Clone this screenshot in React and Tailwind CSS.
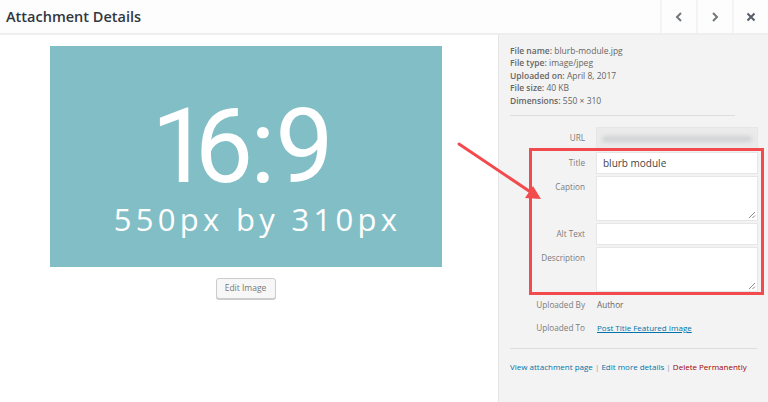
const openSans = "font-['Open_Sans','Noto_Sans',sans-serif]";

const Resize = () => (
  <svg viewBox="0 0 8 8" className="absolute right-[1px] bottom-[1px] w-2 h-2" stroke="#8a8a8a" strokeWidth="1">
    <path d="M1 7 7 1M4.5 7 7 4.5" />
  </svg>
);

const Field = ({ label, className, children }) => (
  <div className="flex">
    <div className="w-[75px] mr-3 pt-[3px] text-right text-[8.2px] leading-[14px] text-[#7c7c7c]">{label}</div>
    <div className={`relative w-[160px] bg-white shadow-[0_0_0_1px_#e6e6e6] ${className}`}>{children}</div>
  </div>
);

const NavButton = ({ children }) => (
  <div className="w-[36px] h-full flex items-center justify-center border-l-2 border-[#f4f4f4]">{children}</div>
);

export default function App() {
  return (
    <div className={`relative w-[768px] h-[402px] overflow-hidden bg-white flex flex-col ${openSans}`}>
      <header className="h-[35px] shrink-0 flex items-center justify-between pl-[6px] bg-[#fdfdfd] border-b-2 border-[#eeeef1]">
        <h1 className="text-[14.5px] font-semibold text-[#32373c]">Attachment Details</h1>
        <div className="h-full flex">
          <NavButton>
            <svg viewBox="0 0 12 12" className="w-3 h-3" fill="none" stroke="#72777c" strokeWidth="2"><path d="M8 2 4 6l4 4" /></svg>
          </NavButton>
          <NavButton>
            <svg viewBox="0 0 12 12" className="w-3 h-3" fill="none" stroke="#72777c" strokeWidth="2"><path d="M4 2l4 4-4 4" /></svg>
          </NavButton>
          <NavButton>
            <svg viewBox="0 0 12 12" className="w-3 h-3" fill="none" stroke="#555d66" strokeWidth="2"><path d="M2.5 2.5l7 7M9.5 2.5l-7 7" /></svg>
          </NavButton>
        </div>
      </header>

      <div className="flex flex-1 min-h-0">
        <main className="w-[498px] shrink-0 flex flex-col items-center pt-[11px] pr-[7px]">
          <div className="w-[392px] h-[221px] bg-[#82bec6] flex flex-col items-center text-white">
            <div className="mt-[51px] pr-[6px] font-['Roboto',sans-serif] text-[104px] leading-[100px]">
              <span className="tracking-[-15px]">1</span>
              <span className="tracking-[-3px]">6</span>:9
            </div>
            <div className="mt-[4px] pl-[24px] text-[31px] leading-[36px] tracking-[4.3px]">550px by 310px</div>
          </div>
          <button className="mt-[11px] h-[21px] w-[60px] rounded-[3px] bg-[#f7f7f7] border border-[#cccccc] shadow-[0_1px_0_#ccc] text-[8.5px] text-[#777777]">
            Edit Image
          </button>
        </main>

        <aside className="flex-1 bg-[#f3f3f3] border-l border-[#e6e6e6] pl-[11px] pt-[10px] text-[8.2px]">
          <div className="text-[8.5px] leading-[12.4px] text-[#666666]">
            <p><b className="font-semibold">File name:</b> blurb-module.jpg</p>
            <p><b className="font-semibold">File type:</b> image/jpeg</p>
            <p><b className="font-semibold">Uploaded on:</b> April 8, 2017</p>
            <p><b className="font-semibold">File size:</b> 40 KB</p>
            <p><b className="font-semibold">Dimensions:</b> 550 × 310</p>
          </div>
          <div className="mt-[8px] w-[225px] border-t border-[#dddddd]" />

          <div className="mt-[12px] flex flex-col gap-[4px]">
            <Field label="URL" className="h-[21px] !bg-[#ebebeb] overflow-hidden">
              <div className="mt-[8px] ml-[5px] h-[6px] w-[150px] rounded-full bg-[#cfd2d4] blur-[2px]" />
            </Field>
            <Field label="Title" className="h-[20px] px-[6px] text-[10px] leading-[20px] text-[#444444]">blurb module</Field>
            <Field label="Caption" className="h-[43px]"><Resize /></Field>
            <Field label="Alt Text" className="h-[20px]" />
            <Field label="Description" className="h-[43px]"><Resize /></Field>
          </div>

          <div className="mt-[7px] flex text-[#7c7c7c] leading-[14px]">
            <div className="w-[75px] mr-3 text-right">Uploaded By</div>
            <div className="text-[#666666]">Author</div>
          </div>
          <div className="mt-[9px] flex text-[#7c7c7c] leading-[14px]">
            <div className="w-[75px] mr-3 text-right">Uploaded To</div>
            <a className="text-[8px] text-[#0073aa] underline">Post Title Featured Image</a>
          </div>

          <div className="mt-[13px] w-[247px] border-t border-[#dddddd]" />
          <div className="mt-[11px] text-[8px] leading-[14px] text-[#999999] whitespace-nowrap">
            <a className="text-[#0073aa]">View attachment page</a> | <a className="text-[#0073aa]">Edit more details</a> | <a className="text-[#a00000]">Delete Permanently</a>
          </div>
        </aside>
      </div>

      {/* red annotation over the form */}
      <div className="absolute left-[529px] top-[148px] w-[235px] h-[147px] border-[3px] border-[#f24b4e]" />
      <svg className="absolute left-[450px] top-[135px] w-[100px] h-[80px]" viewBox="0 0 100 80">
        <path d="M9 9 82 58" stroke="#f24b4e" strokeWidth="3" strokeLinecap="round" />
        <path d="M91 64 83 51 75 63Z" fill="#f24b4e" />
      </svg>
    </div>
  );
}
